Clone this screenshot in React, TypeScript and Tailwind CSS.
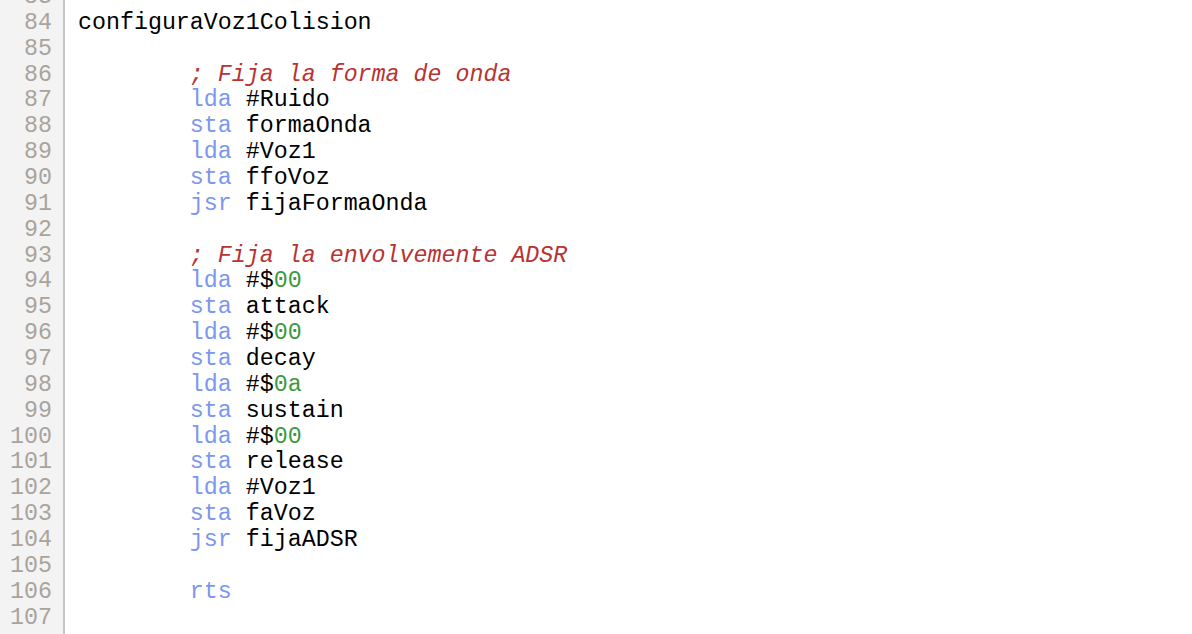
type Tok = { t: string; c?: "kw" | "cm" | "num" };

const lines: Tok[][] = [
  [{ t: "" }],
  [{ t: "configuraVoz1Colision" }],
  [],
  [{ t: "        " }, { t: "; Fija la forma de onda", c: "cm" }],
  [{ t: "        " }, { t: "lda", c: "kw" }, { t: " #Ruido" }],
  [{ t: "        " }, { t: "sta", c: "kw" }, { t: " formaOnda" }],
  [{ t: "        " }, { t: "lda", c: "kw" }, { t: " #Voz1" }],
  [{ t: "        " }, { t: "sta", c: "kw" }, { t: " ffoVoz" }],
  [{ t: "        " }, { t: "jsr", c: "kw" }, { t: " fijaFormaOnda" }],
  [],
  [{ t: "        " }, { t: "; Fija la envolvemente ADSR", c: "cm" }],
  [{ t: "        " }, { t: "lda", c: "kw" }, { t: " #$" }, { t: "00", c: "num" }],
  [{ t: "        " }, { t: "sta", c: "kw" }, { t: " attack" }],
  [{ t: "        " }, { t: "lda", c: "kw" }, { t: " #$" }, { t: "00", c: "num" }],
  [{ t: "        " }, { t: "sta", c: "kw" }, { t: " decay" }],
  [{ t: "        " }, { t: "lda", c: "kw" }, { t: " #$" }, { t: "0a", c: "num" }],
  [{ t: "        " }, { t: "sta", c: "kw" }, { t: " sustain" }],
  [{ t: "        " }, { t: "lda", c: "kw" }, { t: " #$" }, { t: "00", c: "num" }],
  [{ t: "        " }, { t: "sta", c: "kw" }, { t: " release" }],
  [{ t: "        " }, { t: "lda", c: "kw" }, { t: " #Voz1" }],
  [{ t: "        " }, { t: "sta", c: "kw" }, { t: " faVoz" }],
  [{ t: "        " }, { t: "jsr", c: "kw" }, { t: " fijaADSR" }],
  [],
  [{ t: "        " }, { t: "rts", c: "kw" }],
  [],
];

const colorFor = (c?: Tok["c"]) => {
  if (c === "kw") return "text-[#7b97ee]";
  if (c === "cm") return "text-[#b83333] italic";
  if (c === "num") return "text-[#3c9a3c]";
  return "text-black";
};

export default function App() {
  return (
    <div
      className="w-[1192px] h-[634px] overflow-hidden bg-white flex"
      style={{ fontFamily: '"Liberation Mono", "Courier New", monospace' }}
    >
      {/* gutter */}
      <div className="w-[65px] shrink-0 bg-[#f3f3f3] border-r-2 border-[#c4c4c4] h-full overflow-hidden">
        <div className="-mt-[15px] flex flex-col">
          {lines.map((_, i) => (
            <div
              key={i}
              className="h-[25.87px] leading-[25.87px] text-[23.3px] text-right pr-[11px] text-[#aaa39c]"
            >
              {83 + i}
            </div>
          ))}
        </div>
      </div>

      {/* code */}
      <div className="flex-1 pl-[13px] h-full overflow-hidden">
        <div className="-mt-[15px] flex flex-col">
          {lines.map((toks, i) => (
            <div key={i} className="h-[25.87px] leading-[25.87px] text-[23.3px] whitespace-pre">
              {toks.map((tk, j) => (
                <span key={j} className={colorFor(tk.c)}>
                  {tk.t}
                </span>
              ))}
            </div>
          ))}
        </div>
      </div>
    </div>
  );
}
